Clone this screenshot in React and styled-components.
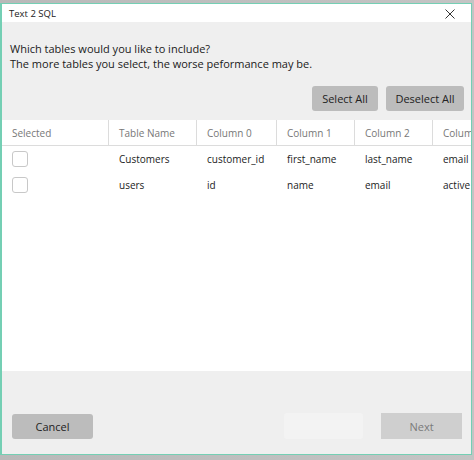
import styled, { createGlobalStyle } from "styled-components"

const GlobalStyle = createGlobalStyle`
    html, body {
        margin: 0;
        padding: 0;
        background: #b9b9b9;
        font-family: "Open Sans", "Noto Sans", sans-serif;
    }
`

const tables = [
    { name: "Customers", columns: ["customer_id", "first_name", "last_name", "email"] },
    { name: "users", columns: ["id", "name", "email", "active"] },
]

const headers = ["Selected", "Table Name", "Column 0", "Column 1", "Column 2", "Column 3"]

const App = () => {
    return (
        <>
            <GlobalStyle />
            <Desktop>
                <Window>
                    <TitleBar>
                        <span>Text 2 SQL</span>
                        <CloseBtn aria-label="close">
                            <svg width="10" height="10" viewBox="0 0 10 10">
                                <path d="M0.5 0.5 L9.5 9.5 M9.5 0.5 L0.5 9.5" stroke="#333" strokeWidth="1" />
                            </svg>
                        </CloseBtn>
                    </TitleBar>
                    <Prompt>
                        <p>Which tables would you like to include?</p>
                        <p>The more tables you select, the worse peformance may be.</p>
                    </Prompt>
                    <ActionRow>
                        <GreyBtn $width={66}>Select All</GreyBtn>
                        <GreyBtn $width={78}>Deselect All</GreyBtn>
                    </ActionRow>
                    <TableArea>
                        <Grid>
                            {headers.map((h) => (
                                <HeadCell key={h}>{h}</HeadCell>
                            ))}
                            {tables.map((t) => (
                                <Row key={t.name}>
                                    <Cell><Check /></Cell>
                                    <Cell>{t.name}</Cell>
                                    {t.columns.map((c, i) => (
                                        <Cell key={i}>{c}</Cell>
                                    ))}
                                </Row>
                            ))}
                        </Grid>
                    </TableArea>
                    <Footer>
                        <GreyBtn $width={81}>Cancel</GreyBtn>
                        <Spacer />
                        <GhostBtn />
                        <NextBtn>Next</NextBtn>
                    </Footer>
                </Window>
            </Desktop>
        </>
    )
}

export default App

const Desktop = styled.div`
    width: 474px;
    height: 460px;
    padding-top: 3px;
    box-sizing: border-box;
    overflow: hidden;
    background: linear-gradient(to right, #b9b9b9, #c4c4c4);
`

const Window = styled.div`
    width: 472px;
    height: 452px;
    box-sizing: border-box;
    border: 1px solid #74cfb4;
    border-left-width: 2px;
    background: #efefef;
    display: flex;
    flex-direction: column;
    overflow: hidden;
`

const TitleBar = styled.div`
    height: 18px;
    background: #fff;
    display: flex;
    align-items: center;
    justify-content: space-between;
    padding: 0 16px 0 7px;
    font-size: 9.5px;
    color: #222;
`

const CloseBtn = styled.div`
    display: flex;
    align-items: center;
    padding-top: 2px;
`

const Prompt = styled.div`
    padding: 19px 8px 0;
    font-size: 11px;
    color: #1a1a1a;
    line-height: 15px;

    p {
        margin: 0;
    }
`

const ActionRow = styled.div`
    display: flex;
    justify-content: flex-end;
    gap: 8px;
    padding: 15px 7px 0 0;
    height: 25px;
`

const GreyBtn = styled.div`
    width: ${(p) => p.$width}px;
    height: 25px;
    border-radius: 3px;
    background: #bcbcbc;
    color: #222;
    font-size: 11px;
    display: flex;
    align-items: center;
    justify-content: center;
`

const TableArea = styled.div`
    margin-top: 9px;
    height: 251px;
    background: #fff;
    overflow: hidden;
`

const Grid = styled.div`
    display: grid;
    grid-template-columns: 107px 88px 80px 78px 78px 60px;
    width: 491px;
`

const HeadCell = styled.div`
    height: 25px;
    border-bottom: 1px solid #dcdcdc;
    border-right: 1px solid #dcdcdc;
    padding-left: 10px;
    display: flex;
    align-items: center;
    font-size: 10px;
    color: #777;
    white-space: nowrap;
`

const Row = styled.div`
    display: contents;
`

const Cell = styled.div`
    height: 26px;
    padding-left: 10px;
    display: flex;
    align-items: center;
    font-size: 10px;
    color: #222;
    white-space: nowrap;
`

const Check = styled.div`
    width: 14px;
    height: 14px;
    border: 1px solid #c8c8c8;
    border-radius: 3px;
    background: #fff;
`

const Footer = styled.div`
    flex: 1;
    display: flex;
    align-items: flex-end;
    gap: 18px;
    padding: 0 9px 15px 10px;
`

const Spacer = styled.div`
    flex: 1;
`

const GhostBtn = styled.div`
    width: 79px;
    height: 26px;
    border-radius: 3px;
    background: #f3f3f3;
`

const NextBtn = styled.div`
    width: 81px;
    height: 26px;
    background: #cfcfcf;
    color: #7a7a7a;
    font-size: 11px;
    display: flex;
    align-items: center;
    justify-content: center;
`
